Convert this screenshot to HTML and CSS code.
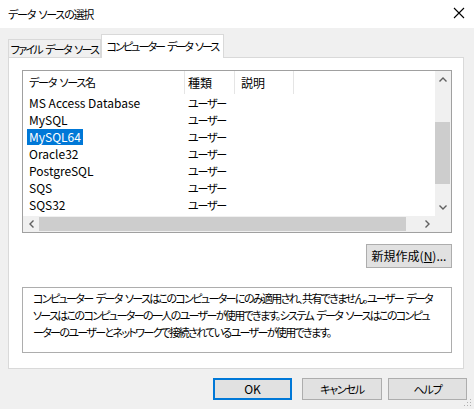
FILE: index.html
```html
<!DOCTYPE html>
<html lang="ja">
<head>
<meta charset="utf-8">
<title>データ ソースの選択</title>
<link rel="stylesheet" href="styles.css">
</head>
<body>
<div class="window">
  <div class="titlebar">
    <span class="title kana">データ ソースの選択</span>
    <svg class="close" width="12" height="12" viewBox="0 0 12 12"><path d="M1 1L11 11M11 1L1 11" stroke="#000" stroke-width="1.1" fill="none"/></svg>
  </div>
  <div class="content">
    <div class="tabs">
      <div class="tab kana">ファイル データ ソース</div>
      <div class="tab active kana">コンピューター データ ソース</div>
    </div>
    <div class="panel">
      <div class="list">
        <div class="list-main">
          <div class="list-area">
            <div class="row header">
              <div class="c1 kana">データ ソース名</div>
              <div class="c2">種類</div>
              <div class="c3">説明</div>
            </div>
            <div class="row"><div class="c1"><span class="item">MS Access Database</span></div><div class="c2 kana">ユーザー</div></div>
            <div class="row"><div class="c1"><span class="item">MySQL</span></div><div class="c2 kana">ユーザー</div></div>
            <div class="row"><div class="c1"><span class="item selected">MySQL64</span></div><div class="c2 kana">ユーザー</div></div>
            <div class="row"><div class="c1"><span class="item">Oracle32</span></div><div class="c2 kana">ユーザー</div></div>
            <div class="row"><div class="c1"><span class="item">PostgreSQL</span></div><div class="c2 kana">ユーザー</div></div>
            <div class="row"><div class="c1"><span class="item">SQS</span></div><div class="c2 kana">ユーザー</div></div>
            <div class="row"><div class="c1"><span class="item">SQS32</span></div><div class="c2 kana">ユーザー</div></div>
          </div>
          <div class="vscroll">
            <div class="sbtn"><svg width="8" height="5" viewBox="0 0 8 5"><path d="M0.5 4.5L4 1L7.5 4.5" stroke="#606060" stroke-width="1.4" fill="none"/></svg></div>
            <div class="vtrack"><div class="vthumb"></div></div>
            <div class="sbtn"><svg width="8" height="5" viewBox="0 0 8 5"><path d="M0.5 0.5L4 4L7.5 0.5" stroke="#606060" stroke-width="1.4" fill="none"/></svg></div>
          </div>
        </div>
        <div class="hscroll">
          <div class="sbtn"><svg width="5" height="8" viewBox="0 0 5 8"><path d="M4.5 0.5L1 4L4.5 7.5" stroke="#606060" stroke-width="1.4" fill="none"/></svg></div>
          <div class="htrack"><div class="hthumb"></div></div>
          <div class="sbtn"><svg width="5" height="8" viewBox="0 0 5 8"><path d="M0.5 0.5L4 4L0.5 7.5" stroke="#606060" stroke-width="1.4" fill="none"/></svg></div>
          <div class="corner"></div>
        </div>
      </div>
      <div class="actions">
        <button class="btn new">新規作成(<u>N</u>)...</button>
      </div>
      <div class="desc kana">コンピューター データ ソースはこのコンピューターにのみ適用され、共有できません。ユーザー データ<br>ソースはこのコンピューターの一人のユーザーが使用できます。システム データ ソースはこのコンピュ<br>ーターのユーザーとネットワークで接続されているユーザーが使用できます。</div>
    </div>
    <div class="footer">
      <button class="btn ok">OK</button>
      <button class="btn cancel kana">キャンセル</button>
      <button class="btn help kana">ヘルプ</button>
    </div>
  </div>
  <svg class="grip" width="8" height="8" viewBox="0 0 8 8"><rect x="6" y="0" width="1" height="1" fill="#b0b0b0"/><rect x="3" y="3" width="1" height="1" fill="#b0b0b0"/><rect x="6" y="3" width="1" height="1" fill="#b0b0b0"/><rect x="0" y="6" width="1" height="1" fill="#b0b0b0"/><rect x="3" y="6" width="1" height="1" fill="#b0b0b0"/><rect x="6" y="6" width="1" height="1" fill="#b0b0b0"/></svg>
</div>
</body>
</html>
```

FILE: styles.css
```css
* { box-sizing: border-box; }
html, body { margin: 0; padding: 0; }
body {
  width: 474px;
  height: 409px;
  overflow: hidden;
  background: #f0f0f0;
  font-family: "Noto Sans CJK JP", "Noto Sans", sans-serif;
  font-size: 12px;
  font-feature-settings: "palt";
  color: #000;
}
.kana {
  font-size: 11px;
  letter-spacing: -1.2px;
  word-spacing: 2px;
}
.window { position: relative; width: 474px; height: 409px; }
.titlebar {
  height: 28px;
  background: #fff;
  display: flex;
  align-items: center;
  justify-content: space-between;
  padding: 0 9px 1px 8px;
}
.title { line-height: 16px; }
.close { display: block; margin-top: -2px; }
.content { padding: 0 10px 0 8px; }
.tabs {
  height: 30px;
  margin-bottom: -1px;
  display: flex;
  align-items: flex-end;
}
.tab {
  height: 18px;
  width: 93px;
  margin-bottom: 1px;
  background: #f0f0f0;
  border: 1px solid #d9d9d9;
  border-bottom: none;
  display: flex;
  align-items: center;
  justify-content: center;
  line-height: 14px;
  padding-top: 1px;
  white-space: nowrap;
  letter-spacing: -1.7px;
  word-spacing: 2.5px;
}
.tab.active {
  height: 24px;
  width: 123px;
  margin-bottom: 0;
  background: #fff;
  position: relative;
  z-index: 1;
  padding-top: 0;
  padding-bottom: 2px;
  letter-spacing: -1.95px;
}
.panel {
  height: 312px;
  width: 456px;
  background: #fff;
  border: 1px solid #d9d9d9;
  padding: 12px 10px 15px 13px;
  display: flex;
  flex-direction: column;
}
.list {
  height: 163px;
  width: 430px;
  border: 1px solid #a0a0a0;
  display: flex;
  flex-direction: column;
}
.list-main { height: 145px; display: flex; }
.list-area { flex: 1; overflow: hidden; }
.row { display: flex; height: 17px; align-items: center; white-space: nowrap; }
.row.header { height: 23px; align-items: stretch; }
.header > div { display: flex; align-items: center; padding-bottom: 1px; }
.c1 { width: 161px; padding-left: 4px; }
.header .c1 { padding-left: 6px; }
.c2 { width: 50px; padding-left: 4px; }
.header .c2 { border-left: 1px solid #e5e5e5; padding-left: 3px; }
.header .c3 { border-left: 1px solid #e5e5e5; padding-left: 6px; flex: 0 0 auto; width: 60px; border-right: 1px solid #e5e5e5; }
.item { padding: 0 2px; line-height: 16px; display: inline-block; }
.item.selected { background: #0078d7; color: #fff; }
.vscroll {
  width: 16px;
  background: #f0f0f0;
  display: flex;
  flex-direction: column;
}
.sbtn {
  width: 16px;
  height: 17px;
  flex: 0 0 auto;
  display: flex;
  align-items: center;
  justify-content: center;
}
.sbtn svg { display: block; }
.vtrack { flex: 1; }
.vthumb { margin: 34px 1px 0 0; height: 62px; background: #cdcdcd; }
.hscroll {
  height: 16px;
  background: #f0f0f0;
  display: flex;
}
.hscroll .sbtn { height: 16px; }
.htrack { flex: 1; display: flex; align-items: center; }
.hthumb { width: 367px; height: 14px; background: #cdcdcd; }
.corner { width: 16px; background: #f0f0f0; }
.actions {
  margin-top: 11px;
  display: flex;
  justify-content: flex-end;
  width: 430px;
}
.btn {
  font-family: inherit;
  font-size: 12px;
  font-feature-settings: "palt";
  color: #000;
  background: #e1e1e1;
  border: 1px solid #adadad;
  padding: 0;
  margin: 0;
  display: flex;
  align-items: center;
  justify-content: center;
  line-height: 14px;
}
.btn.kana { font-size: 11px; letter-spacing: -1.2px; }
.btn.new { width: 86px; height: 24px; }
.desc {
  margin-top: 19px;
  height: 66px;
  width: 430px;
  border: 1px solid #adadad;
  padding: 2px 4px 0 10px;
  line-height: 17px;
  white-space: nowrap;
  overflow: hidden;
  letter-spacing: -1.65px;
  word-spacing: 2.5px;
}
.footer {
  margin-top: 9px;
  margin-right: -3px;
  display: flex;
  justify-content: flex-end;
}
.footer .btn { width: 79px; height: 22px; }
.btn.ok { border-color: #0078d7; box-shadow: inset 0 0 0 1px #0078d7; }
.btn.cancel { width: 80px; margin-left: 10px; }
.btn.help { margin-left: 6px; }
.grip { position: absolute; right: 2px; bottom: 2px; }
```
